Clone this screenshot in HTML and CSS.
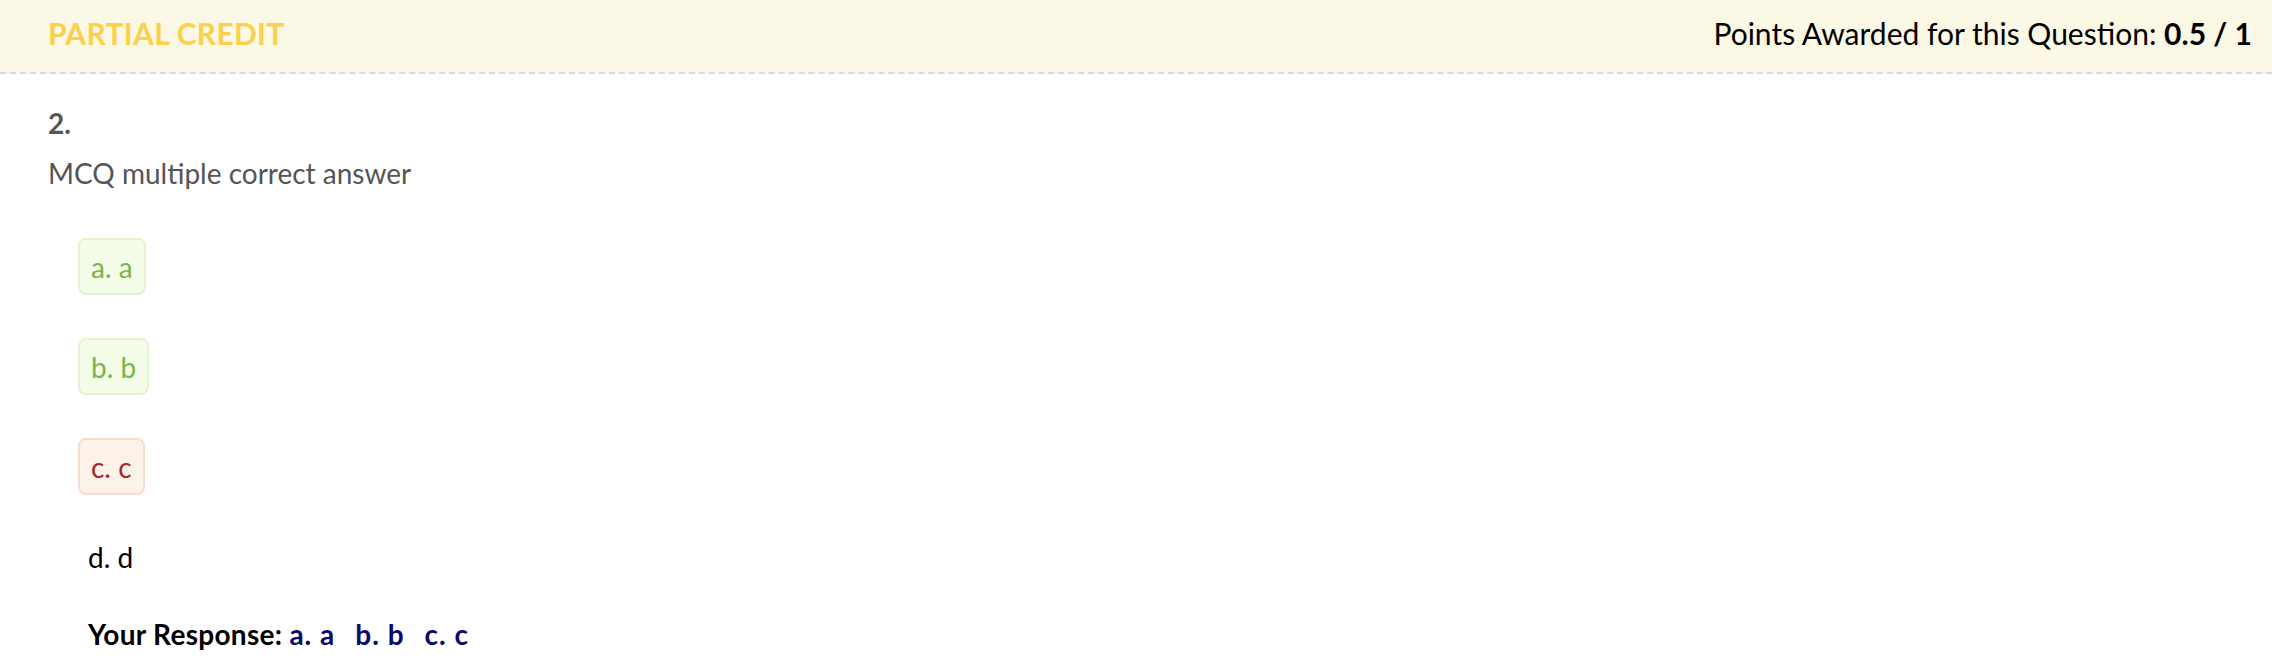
FILE: index.html
```html
<!DOCTYPE html>
<html lang="en">

<head>
    <meta charset="UTF-8">
    <meta name="viewport" content="width=device-width, initial-scale=1.0">
    <title>Question Result</title>
    <link rel="stylesheet" href="styles.css">
</head>

<body>
    <div class="result-header">
        <span class="status">PARTIAL CREDIT</span>
        <span class="points">Points Awarded for this Question: <b>0.5 / 1</b></span>
    </div>

    <div class="question">
        <div class="number">2.</div>
        <p class="prompt">MCQ multiple correct answer</p>

        <ul class="options">
            <li class="option correct">a. a</li>
            <li class="option correct">b. b</li>
            <li class="option wrong">c. c</li>
            <li class="option plain">d. d</li>
        </ul>

        <p class="response">Your Response: <span>a. a</span><span>b. b</span><span>c. c</span></p>
    </div>
</body>

</html>
```

FILE: styles.css
```css
* {
    padding: 0;
    margin: 0;
    box-sizing: border-box;
}

body {
    font-family: Lato, "Noto Sans", Arial, sans-serif;
    background-color: #fff;
    color: #000;
}

.result-header {
    height: 74px;
    display: flex;
    justify-content: space-between;
    align-items: center;
    padding: 0 20px 6px 48px;
    background-color: #fbf8e5;
    border-bottom: 2px dashed #d5dcdb;
    font-size: 30px;
    line-height: 36px;
}

.status {
    color: #fbd14b;
    font-weight: 700;
    letter-spacing: 0.3px;
}

.points b {
    font-weight: 700;
}

.question {
    padding: 32px 48px 0;
}

.number {
    font-size: 28px;
    line-height: 34px;
    font-weight: 700;
    color: #555;
}

.prompt {
    margin-top: 16px;
    font-size: 28px;
    line-height: 34px;
    color: #555;
}

.options {
    list-style: none;
    margin-top: 48px;
    padding-left: 30px;
    display: flex;
    flex-direction: column;
    align-items: flex-start;
    gap: 43px;
    font-size: 28px;
    line-height: 34px;
}

.option {
    padding: 9.5px 11px;
    border: 2px solid transparent;
    border-radius: 8px;
}

.correct {
    background-color: #f3fde8;
    border-color: #e3f4cd;
    color: #79b548;
}

.wrong {
    background-color: #fdf2ea;
    border-color: #f7dccf;
    color: #a3282a;
}

.plain {
    padding: 2px 10px 0;
    border: none;
}

.response {
    margin-top: 43px;
    padding-left: 40px;
    font-size: 28px;
    line-height: 34px;
    font-weight: 700;
    letter-spacing: 0.3px;
}

.response span {
    color: #0a0a6e;
    margin-right: 20px;
    letter-spacing: 1px;
}
```
